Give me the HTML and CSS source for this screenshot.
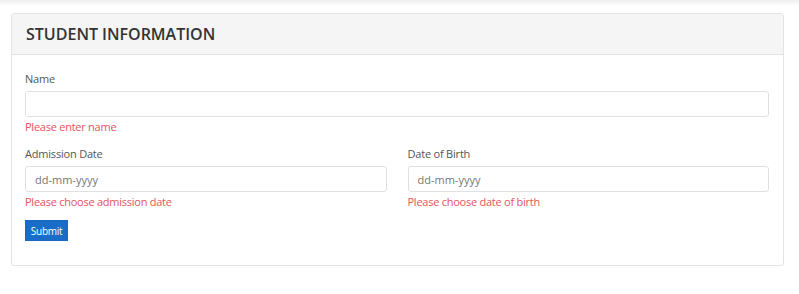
FILE: index.html
```html
<!DOCTYPE html>
<html lang="en">
<head>
<meta charset="utf-8">
<title>Student Information</title>
<link rel="stylesheet" href="styles.css">
</head>
<body>
<div class="topbar"></div>
<main class="page">
  <section class="card">
    <header class="card-header">
      <h1 class="card-title">STUDENT INFORMATION</h1>
    </header>
    <form class="card-body">
      <div class="field">
        <label class="label" for="name">Name</label>
        <input class="input" id="name" type="text">
        <div class="error">Please enter name</div>
      </div>
      <div class="row">
        <div class="field">
          <label class="label" for="adm">Admission Date</label>
          <input class="input" id="adm" type="text" placeholder="dd-mm-yyyy">
          <div class="error">Please choose admission date</div>
        </div>
        <div class="field">
          <label class="label" for="dob">Date of Birth</label>
          <input class="input" id="dob" type="text" placeholder="dd-mm-yyyy">
          <div class="error">Please choose date of birth</div>
        </div>
      </div>
      <div class="actions">
        <button class="btn" type="button">Submit</button>
      </div>
    </form>
  </section>
</main>
</body>
</html>
```
FILE: styles.css
```css
* { box-sizing: border-box; }
html, body { margin: 0; padding: 0; background: #ffffff; }
body {
  font-family: "Open Sans", "Noto Sans", "Liberation Sans", sans-serif;
  color: #555;
  width: 799px;
  height: 294px;
  overflow: hidden;
}
.topbar {
  height: 6px;
  background: linear-gradient(to bottom, #eeeeee, #ffffff);
}
.page {
  padding: 7px 15px 0 11px;
}
.card {
  border: 1px solid #e3e3e3;
  border-radius: 3px;
  background: #fff;
}
.card-header {
  height: 41px;
  background: #f5f5f5;
  border-bottom: 1px solid #e1e1e1;
  display: flex;
  align-items: center;
  padding: 0 14px;
}
.card-title {
  margin: 0;
  font-size: 16px;
  font-weight: 600;
  color: #333;
}
.card-body {
  padding: 16px 14px 24px 13px;
  display: flex;
  flex-direction: column;
}
.field {
  display: flex;
  flex-direction: column;
}
.label {
  font-size: 11px;
  line-height: 16px;
  letter-spacing: -0.2px;
  color: #555;
  margin-bottom: 4px;
}
.input {
  height: 26px;
  border: 1px solid #dde1e4;
  border-radius: 3px;
  padding: 0 9px;
  font-family: inherit;
  font-size: 11px;
  color: #555;
  background: #fff;
  outline: none;
}
.input::placeholder { color: #777; }
.error {
  font-size: 11px;
  line-height: 16px;
  letter-spacing: -0.25px;
  color: #e5535c;
  margin-top: 2px;
}
.row {
  margin-top: 11px;
  display: grid;
  grid-template-columns: 1fr 1fr;
  column-gap: 21px;
}
.actions {
  margin-top: 10px;
  display: flex;
}
.btn {
  height: 21px;
  width: 43px;
  padding: 0;
  border: 1px solid #1668c0;
  border-radius: 0;
  background: #1a6dc6;
  color: #fff;
  font-family: inherit;
  font-size: 10px;
  letter-spacing: -0.3px;
  cursor: pointer;
}
```
